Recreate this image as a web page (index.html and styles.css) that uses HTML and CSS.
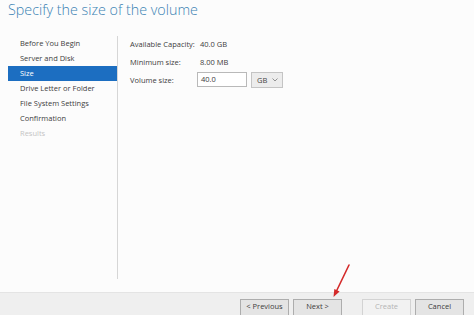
FILE: index.html
```html
<!DOCTYPE html>
<html lang="en">
<head>
	<meta charset="UTF-8">
	<title>New Volume Wizard</title>
	<link rel="stylesheet" href="styles.css">
</head>
<body>

<div id="wizard">
	<h1 class="title">Specify the size of the volume</h1>

	<div class="main">
		<ul class="steps">
			<li>Before You Begin</li>
			<li>Server and Disk</li>
			<li class="active">Size</li>
			<li>Drive Letter or Folder</li>
			<li>File System Settings</li>
			<li>Confirmation</li>
			<li class="off">Results</li>
		</ul>

		<div class="content">
			<div class="row">
				<span class="label">Available Capacity:</span>
				<span class="value">40.0 GB</span>
			</div>
			<div class="row">
				<span class="label">Minimum size:</span>
				<span class="value">8.00 MB</span>
			</div>
			<div class="row">
				<span class="label">Volume size:</span>
				<span class="field">40.0</span>
				<span class="select">GB
					<svg width="6" height="4" viewBox="0 0 6 4"><path d="M0.5 0.5 L3 3 L5.5 0.5" fill="none" stroke="#888" stroke-width="0.9"/></svg>
				</span>
			</div>
		</div>
	</div>

	<div class="footer">
		<span class="btn">&lt; Previous</span>
		<span class="btn">Next &gt;</span>
		<span class="btn disabled create">Create</span>
		<span class="btn">Cancel</span>
	</div>

	<!-- annotation arrow -->
	<svg class="pointer" width="30" height="40" viewBox="0 0 30 40">
		<path d="M23 3 L10 30" stroke="#d42a2a" stroke-width="1.6" fill="none" stroke-linecap="round"/>
		<path d="M7.5 35 L8.3 27 L13.6 29.6 Z" fill="#d42a2a"/>
	</svg>
</div>

</body>
</html>
```

FILE: styles.css
```css
*{
	margin: 0;
	padding: 0;
}
li{
	list-style: none;
}
body{
	background: #fcfcfc;
	font-family: "Open Sans", "Noto Sans", sans-serif;
	font-size: 7.5px;
	color: #3c3c3c;
}

#wizard{
	width: 474px;
	height: 315px;
	display: flex;
	flex-direction: column;
	position: relative;
	overflow: hidden;
}

.title{
	height: 27px;
	padding: 0 8px;
	font-size: 14.3px;
	line-height: 20px;
	font-weight: 300;
	color: #3a82b3;
}

.main{
	flex: 1;
	display: flex;
	padding: 9px 0 13px 8px;
}

.steps{
	width: 109px;
}
.steps li{
	height: 15px;
	line-height: 15px;
	padding-left: 12px;
}
.steps .active{
	background: #1c6ec1;
	color: #fff;
}
.steps .off{
	color: #c4c4c4;
}

.content{
	flex: 1;
	border-left: 1px solid #d6d6d6;
	padding: 0 0 0 12px;
}
.row{
	display: flex;
	align-items: center;
	height: 15px;
	margin-bottom: 3px;
}
.label{
	width: 67px;
	flex-shrink: 0;
}
.value{
	padding-left: 3px;
}
.field{
	width: 45px;
	height: 13px;
	line-height: 13px;
	padding-left: 3px;
	background: #fff;
	border: 1px solid #b9b9b9;
}
.select{
	display: flex;
	align-items: center;
	justify-content: space-between;
	width: 21px;
	height: 14px;
	margin-left: 4px;
	padding: 0 4px 0 5px;
	background: #ececec;
	border: 1px solid #c4c4c4;
	color: #444;
}

.footer{
	height: 23px;
	display: flex;
	justify-content: flex-end;
	padding: 6px 10px 0 0;
	box-sizing: border-box;
	background: #efefef;
	border-top: 1px solid #e4e4e4;
}
.btn{
	height: 15px;
	line-height: 13px;
	padding: 0 2px;
	min-width: 43px;
	text-align: center;
	background: #e4e4e4;
	border: 1px solid #adadad;
	margin-left: 4px;
}
.btn.create{
	margin-left: 20px;
}
.btn.disabled{
	color: #b5b5b5;
	background: #f2f2f2;
	border-color: #d3d3d3;
}

.pointer{
	position: absolute;
	left: 326px;
	top: 262px;
}
```
